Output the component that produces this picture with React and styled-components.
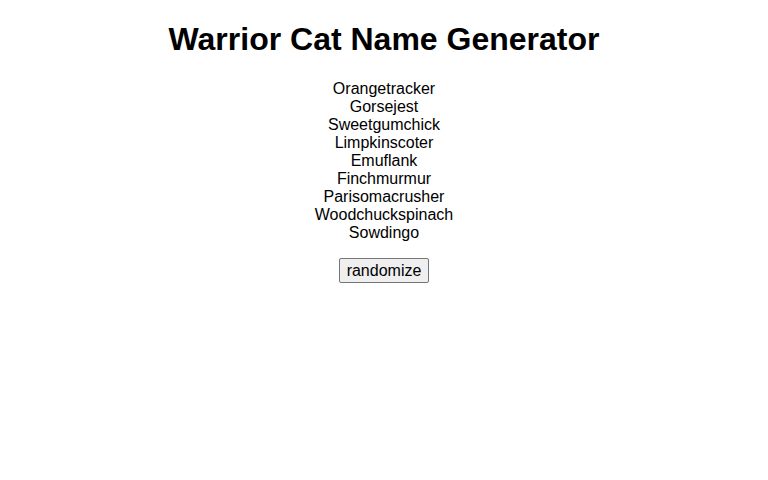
import React, { useState } from "react";
import styled, { createGlobalStyle } from "styled-components";

const Global = createGlobalStyle`
  body {
    margin: 8px;
    font-family: "Liberation Sans", Arial, sans-serif;
    color: #000;
    background: #fff;
  }
`;

const Page = styled.main`
  display: flex;
  flex-direction: column;
  align-items: center;
  text-align: center;
`;

const Title = styled.h1`
  font-size: 32px;
  font-weight: bold;
  margin: 13.44px 0 21.44px;
`;

const NameList = styled.div`
  display: flex;
  flex-direction: column;
  align-items: center;
  font-size: 16px;
  line-height: 18px;
`;

const Name = styled.div``;

const Actions = styled.p`
  margin: 16px 0;
`;

const Button = styled.button`
  font-family: "Liberation Sans", Arial, sans-serif;
  font-size: 16px;
  line-height: 19px;
  color: #000;
  background: #efefef;
  border: 1px solid #767676;
  border-radius: 2px;
  padding: 2px 7px;
  cursor: pointer;
`;

const initial = [
  "Orangetracker",
  "Gorsejest",
  "Sweetgumchick",
  "Limpkinscoter",
  "Emuflank",
  "Finchmurmur",
  "Parisomacrusher",
  "Woodchuckspinach",
  "Sowdingo",
];

const prefixes = ["Orange", "Gorse", "Sweetgum", "Limpkin", "Emu", "Finch", "Parisoma", "Woodchuck", "Sow"];
const suffixes = ["tracker", "jest", "chick", "scoter", "flank", "murmur", "crusher", "spinach", "dingo"];

const pick = (arr) => arr[Math.floor(Math.random() * arr.length)];

export default function App() {
  const [names, setNames] = useState(initial);
  const randomize = () =>
    setNames(names.map(() => pick(prefixes) + pick(suffixes)));

  return (
    <>
      <Global />
      <Page>
        <Title>Warrior Cat Name Generator</Title>
        <NameList>
          {names.map((n, i) => (
            <Name key={i}>{n}</Name>
          ))}
        </NameList>
        <Actions>
          <Button onClick={randomize}>randomize</Button>
        </Actions>
      </Page>
    </>
  );
}
